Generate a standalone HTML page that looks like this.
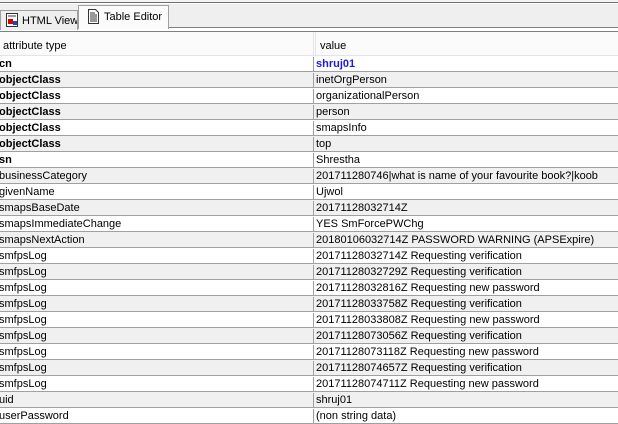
<!DOCTYPE html>
<html><head><style>
*{margin:0;padding:0;box-sizing:border-box}
body{width:618px;height:424px;overflow:hidden;background:#fff;font-family:"Liberation Sans",Tahoma,sans-serif;font-size:11px;color:#000;position:relative}
.top{position:absolute;left:0;top:0;width:618px;height:3px;background:#f4f4f4;border-bottom:1px solid #707070}
.strip{position:absolute;left:0;top:4px;width:618px;height:24px;background:#efefef;border-bottom:1px solid #808080}
.tab{position:absolute;height:20px;border:1px solid #a0a0a0;border-bottom:none;font-size:11px;line-height:18px;white-space:nowrap;overflow:hidden}
.hdr{position:absolute;left:0;top:31px;width:618px;height:25px;background:#fbfbfb;border-top:1px solid #808080;border-bottom:1px solid #e4e4e4}
.row{position:absolute;left:0;width:618px;height:16px;border-bottom:1px solid #a0a0a0;line-height:15px;white-space:nowrap}
.row.g{background:#f0f0f0}
.c1{position:absolute;left:-1px;top:1px;width:315px;height:15px;overflow:hidden;border-right:1px solid #a0a0a0}
.c2{position:absolute;left:315px;top:1px;padding-left:1px}
b{font-weight:bold}
</style></head><body>
<div class="top"></div>
<div class="strip">
 <div class="tab" style="left:0;top:6px;width:78px;background:#efefef">
  <svg style="position:absolute;left:4px;top:2px" width="14" height="15"><rect x="1.5" y="0.5" width="11" height="13" fill="#fff" stroke="#333"/><rect x="3" y="6" width="5" height="5" fill="#d00"/><rect x="8" y="8" width="4" height="4" fill="#24c"/><line x1="3" y1="3" x2="11" y2="3" stroke="#333"/></svg>
  <span style="position:absolute;left:21px;top:1px">HTML View</span></div>
 <div class="tab" style="left:78px;top:1px;width:91px;height:24px;background:#fbfbfb">
  <svg style="position:absolute;left:8px;top:3px" width="13" height="15"><path d="M1.5 .5h7l3 3v11h-10z" fill="#fff" stroke="#333"/><path d="M3 4h5M3 6h7M3 8h7M3 10h7M3 12h7" stroke="#333"/></svg>
  <span style="position:absolute;left:25px;top:2px">Table Editor</span></div>
</div>
<div class="hdr">
 <span style="position:absolute;left:3px;top:8px">attribute type</span>
 <div style="position:absolute;left:313px;top:0;width:3px;height:24px;border-left:1px solid #e4e4e4;border-right:1px solid #e4e4e4"></div>
 <span style="position:absolute;left:320px;top:8px">value</span>
</div>
<div class="row" style="top:56px"><div class="c1"><b>cn</b></div><div class="c2"><b style="color:#1a1adc">shruj01</b></div></div>
<div class="row g" style="top:72px"><div class="c1"><b>objectClass</b></div><div class="c2">inetOrgPerson</div></div>
<div class="row" style="top:88px"><div class="c1"><b>objectClass</b></div><div class="c2">organizationalPerson</div></div>
<div class="row g" style="top:104px"><div class="c1"><b>objectClass</b></div><div class="c2">person</div></div>
<div class="row" style="top:120px"><div class="c1"><b>objectClass</b></div><div class="c2">smapsInfo</div></div>
<div class="row g" style="top:136px"><div class="c1"><b>objectClass</b></div><div class="c2">top</div></div>
<div class="row" style="top:152px"><div class="c1"><b>sn</b></div><div class="c2">Shrestha</div></div>
<div class="row g" style="top:168px"><div class="c1">businessCategory</div><div class="c2">201711280746|what is name of your favourite book?|koob</div></div>
<div class="row" style="top:184px"><div class="c1">givenName</div><div class="c2">Ujwol</div></div>
<div class="row g" style="top:200px"><div class="c1">smapsBaseDate</div><div class="c2">20171128032714Z</div></div>
<div class="row" style="top:216px"><div class="c1">smapsImmediateChange</div><div class="c2">YES SmForcePWChg</div></div>
<div class="row g" style="top:232px"><div class="c1">smapsNextAction</div><div class="c2">20180106032714Z PASSWORD WARNING (APSExpire)</div></div>
<div class="row" style="top:248px"><div class="c1">smfpsLog</div><div class="c2">20171128032714Z Requesting verification</div></div>
<div class="row g" style="top:264px"><div class="c1">smfpsLog</div><div class="c2">20171128032729Z Requesting verification</div></div>
<div class="row" style="top:280px"><div class="c1">smfpsLog</div><div class="c2">20171128032816Z Requesting new password</div></div>
<div class="row g" style="top:296px"><div class="c1">smfpsLog</div><div class="c2">20171128033758Z Requesting verification</div></div>
<div class="row" style="top:312px"><div class="c1">smfpsLog</div><div class="c2">20171128033808Z Requesting new password</div></div>
<div class="row g" style="top:328px"><div class="c1">smfpsLog</div><div class="c2">20171128073056Z Requesting verification</div></div>
<div class="row" style="top:344px"><div class="c1">smfpsLog</div><div class="c2">20171128073118Z Requesting new password</div></div>
<div class="row g" style="top:360px"><div class="c1">smfpsLog</div><div class="c2">20171128074657Z Requesting verification</div></div>
<div class="row" style="top:376px"><div class="c1">smfpsLog</div><div class="c2">20171128074711Z Requesting new password</div></div>
<div class="row g" style="top:392px"><div class="c1">uid</div><div class="c2">shruj01</div></div>
<div class="row" style="top:408px"><div class="c1">userPassword</div><div class="c2">(non string data)</div></div>
</body></html>
